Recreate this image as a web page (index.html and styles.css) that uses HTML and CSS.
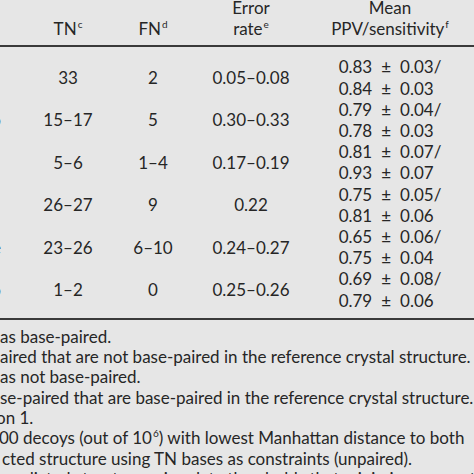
FILE: index.html
```html
<!DOCTYPE html>
<html>
<head>
<meta charset="utf-8">
<link rel="stylesheet" href="styles.css">
</head>
<body>
<div class="page">
  <div class="row head">
    <div class="stub"></div>
    <div class="cell">&nbsp;<br>TN<sup>c</sup></div>
    <div class="cell">&nbsp;<br>FN<sup>d</sup></div>
    <div class="cell">Error<br>rate<sup>e</sup></div>
    <div class="cell">Mean<br>PPV/sensitivity<sup>f</sup></div>
  </div>
  <div class="body">
    <div class="row">
      <div class="stub"></div>
      <div class="cell">33</div>
      <div class="cell">2</div>
      <div class="cell">0.05–0.08</div>
      <div class="cell"><div class="pm"><p><span>0.83</span><span class="sg">±</span><span>0.03/</span></p><p><span>0.84</span><span class="sg">±</span><span>0.03</span></p></div></div>
    </div>
    <div class="row">
      <div class="stub">o</div>
      <div class="cell">15–17</div>
      <div class="cell">5</div>
      <div class="cell">0.30–0.33</div>
      <div class="cell"><div class="pm"><p><span>0.79</span><span class="sg">±</span><span>0.04/</span></p><p><span>0.78</span><span class="sg">±</span><span>0.03</span></p></div></div>
    </div>
    <div class="row">
      <div class="stub"></div>
      <div class="cell">5–6</div>
      <div class="cell">1–4</div>
      <div class="cell">0.17–0.19</div>
      <div class="cell"><div class="pm"><p><span>0.81</span><span class="sg">±</span><span>0.07/</span></p><p><span>0.93</span><span class="sg">±</span><span>0.07</span></p></div></div>
    </div>
    <div class="row">
      <div class="stub"></div>
      <div class="cell">26–27</div>
      <div class="cell">9</div>
      <div class="cell">0.22</div>
      <div class="cell"><div class="pm"><p><span>0.75</span><span class="sg">±</span><span>0.05/</span></p><p><span>0.81</span><span class="sg">±</span><span>0.06</span></p></div></div>
    </div>
    <div class="row">
      <div class="stub">e</div>
      <div class="cell">23–26</div>
      <div class="cell">6–10</div>
      <div class="cell">0.24–0.27</div>
      <div class="cell"><div class="pm"><p><span>0.65</span><span class="sg">±</span><span>0.06/</span></p><p><span>0.75</span><span class="sg">±</span><span>0.04</span></p></div></div>
    </div>
    <div class="row">
      <div class="stub">o</div>
      <div class="cell">1–2</div>
      <div class="cell">0</div>
      <div class="cell">0.25–0.26</div>
      <div class="cell"><div class="pm"><p><span>0.69</span><span class="sg">±</span><span>0.08/</span></p><p><span>0.79</span><span class="sg">±</span><span>0.06</span></p></div></div>
    </div>
  </div>
  <div class="notes">
    <p>as base-paired.</p>
    <p>aired that are not base-paired in the reference crystal structure.</p>
    <p>as not base-paired.</p>
    <p>se-paired that are base-paired in the reference crystal structure.</p>
    <p class="cut">on 1.</p>
    <p class="cut1">00 decoys (out of 10<sup>6</sup>) with lowest Manhattan distance to both</p>
    <p class="in">cted structure using TN bases as constraints (unpaired).</p>
    <p>predicted structure using data thresholds that minimize error rate</p>
  </div>
</div>
</body>
</html>
```
FILE: styles.css
```css
html, body {
  margin: 0;
  padding: 0;
  width: 474px;
  height: 474px;
  overflow: hidden;
  background: #e6e6e6;
}
.page {
  font-family: "Lato", "Noto Sans", sans-serif;
  font-size: 17px;
  color: #262626;
  margin-top: -3px;
}
.row {
  display: grid;
  grid-template-columns: 26px 84px 86px 110px 168px;
  align-items: center;
  line-height: 21.2px;
}
.row.head {
  padding-bottom: 6px;
  border-bottom: 2px solid #3a3a3a;
}
.cell {
  text-align: center;
  white-space: nowrap;
}
.stub {
  text-align: right;
  padding-right: 25px;
  white-space: nowrap;
  direction: rtl;
}
sup {
  font-size: 10px;
  line-height: 0;
  vertical-align: 7px;
  margin-left: 1px;
}
.body {
  padding: 9px 0 7px;
  border-bottom: 2px solid #3a3a3a;
}
.body .row {
  min-height: 42.4px;
}
.pm {
  display: inline-block;
  text-align: left;
}
.pm p {
  margin: 0;
  display: flex;
}
.pm .sg {
  margin: 0 9px;
}
.notes {
  padding-top: 7px;
  line-height: 20.3px;
}
.notes p {
  margin: 0;
  white-space: nowrap;
}
.notes .cut {
  text-indent: -4px;
}
.notes .cut1 {
  text-indent: -1px;
}
.notes .in {
  text-indent: 2px;
}
.notes sup {
  vertical-align: 7px;
}
```
